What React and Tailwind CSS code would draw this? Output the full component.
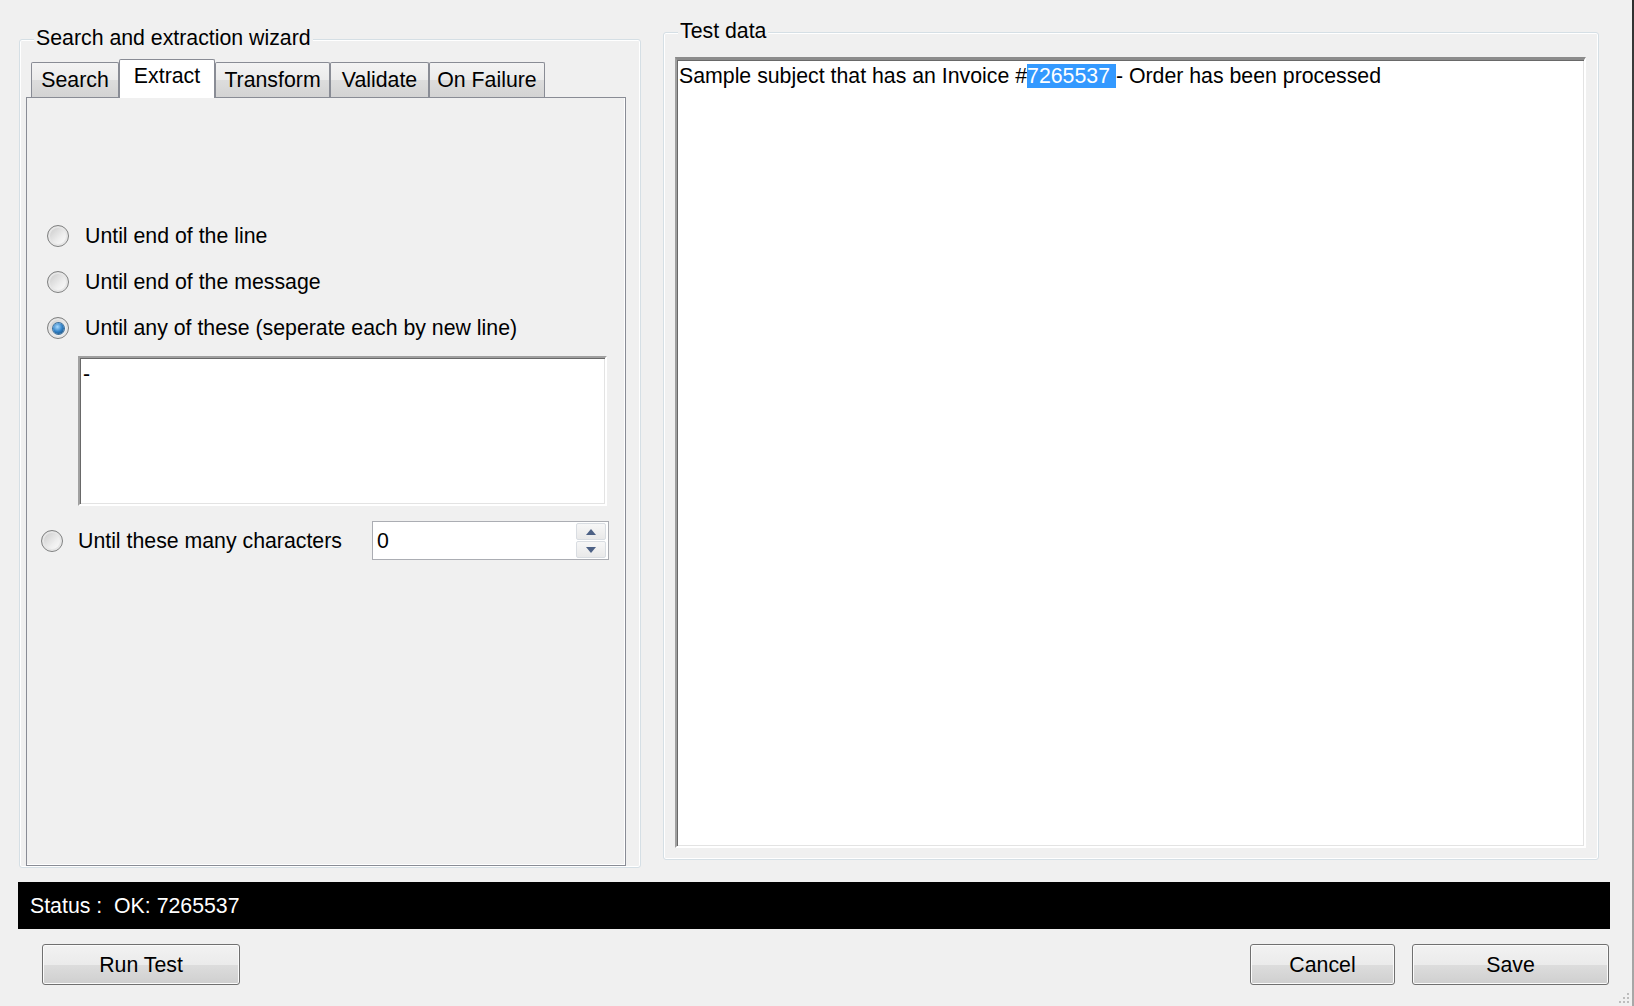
// App.jsx
function Radio({ checked }) {
  return (
    <span className="flex h-[22px] w-[22px] shrink-0 items-center justify-center rounded-full border border-[#7f8080] bg-[linear-gradient(135deg,#c6c6c6,#eeeeee_60%,#ffffff)] shadow-[inset_0_0_0_2px_#e6e6e6]">
      {checked && (
        <span className="h-[11px] w-[11px] rounded-full bg-[radial-gradient(circle_at_40%_35%,#a9dbff,#2f80c6_50%,#163f66)] shadow-[0_0_0_1px_#3a6f9c]" />
      )}
    </span>
  )
}

function Button({ children, className = '' }) {
  return (
    <button className={`flex h-[41px] items-center justify-center rounded-[3px] border border-[#707070] bg-[linear-gradient(#f2f2f2,#ebebeb_50%,#dddddd_50%,#cfcfcf)] shadow-[inset_0_0_0_1px_#fbfbfb] ${className}`}>
      {children}
    </button>
  )
}

function GroupBox({ title, className = '', children }) {
  return (
    <div className={`relative rounded-[3px] border border-[#d5dfe5] shadow-[inset_0_0_0_1px_#ffffff] ${className}`}>
      <span className="absolute left-[14px] top-[-14px] bg-[#f0f0f0] px-[2px]">{title}</span>
      {children}
    </div>
  )
}

function Tab({ label, selected, className = '' }) {
  if (selected) {
    return (
      <div className={`relative z-10 -mb-px flex h-[39px] items-start justify-center rounded-t-[2px] border border-b-0 border-[#898c95] bg-white pt-[4px] ${className}`}>
        {label}
      </div>
    )
  }
  return (
    <div className={`flex h-[35px] items-center justify-center rounded-t-[2px] border border-b-0 border-[#898c95] bg-[linear-gradient(#f3f3f3,#ebebeb_50%,#dddddd_50%,#d3d3d3)] ${className}`}>
      {label}
    </div>
  )
}

function Arrow({ up }) {
  return (
    <svg width="10" height="6" viewBox="0 0 10 6">
      {up ? <path d="M0 6 L5 0 L10 6 Z" fill="#4d6185" /> : <path d="M0 0 L5 6 L10 0 Z" fill="#4d6185" />}
    </svg>
  )
}

export default function App() {
  return (
    <div className="flex h-[1006px] w-[1634px] overflow-hidden bg-[#f0f0f0] font-['Liberation_Sans',Arial,sans-serif] text-[21.3px] leading-[24px] text-black">
      <div className="relative flex w-[1632px] flex-col">
        <div className="flex h-[868px] items-start pl-[19px]">
          {/* wizard */}
          <GroupBox title="Search and extraction wizard" className="mt-[39px] h-[829px] w-[622px]">
            <div className="ml-[6px] mt-[19px]">
              <div className="flex h-[38px] items-end pl-[5px]">
                <Tab label="Search" className="w-[88px]" />
                <Tab label="Extract" selected className="w-[96px]" />
                <Tab label="Transform" className="w-[115px]" />
                <Tab label="Validate" className="w-[99px]" />
                <Tab label="On Failure" className="w-[116px]" />
              </div>
              <div className="flex h-[769px] w-[600px] flex-col border border-[#898c95] pt-[115px] shadow-[inset_-1px_-1px_0_#ffffff]">
                <div className="flex h-[46px] items-center gap-[16px] pl-[20px]">
                  <Radio />
                  <span>Until end of the line</span>
                </div>
                <div className="flex h-[46px] items-center gap-[16px] pl-[20px]">
                  <Radio />
                  <span>Until end of the message</span>
                </div>
                <div className="flex h-[46px] items-center gap-[16px] pl-[20px]">
                  <Radio checked />
                  <span>Until any of these (seperate each by new line)</span>
                </div>
                <div className="ml-[51px] mt-[5px] h-[150px] w-[529px] border-2 border-b-white border-l-[#a0a0a0] border-r-white border-t-[#a0a0a0] bg-white pl-[3px] pt-[4px] shadow-[inset_1px_1px_0_#696969,inset_-1px_-1px_0_#e3e3e3]">
                  -
                </div>
                <div className="mt-[15px] flex h-[39px] items-center pl-[14px] pr-[16px]">
                  <Radio />
                  <span className="ml-[15px]">Until these many characters</span>
                  <div className="ml-auto flex h-[39px] w-[237px] items-center border border-[#abadb3] bg-white pl-[4px]">
                    <span className="flex-1">0</span>
                    <div className="mr-[2px] flex flex-col gap-[1px]">
                      <div className="flex h-[17px] w-[30px] items-center justify-center rounded-[2px] border border-[#d9dde2] bg-[linear-gradient(#f7f7f7,#e9e9e9)]">
                        <Arrow up />
                      </div>
                      <div className="flex h-[17px] w-[30px] items-center justify-center rounded-[2px] border border-[#d9dde2] bg-[linear-gradient(#f7f7f7,#e9e9e9)]">
                        <Arrow />
                      </div>
                    </div>
                  </div>
                </div>
              </div>
            </div>
          </GroupBox>

          {/* test data */}
          <GroupBox title="Test data" className="ml-[22px] mt-[32px] h-[828px] w-[936px]">
            <div className="ml-[11px] mt-[24px] h-[791px] w-[911px] border-2 border-t-[3px] border-b-white border-l-[#a0a0a0] border-r-white border-t-[#8c8c8c] bg-white pl-[2px] pt-[4px] shadow-[inset_1px_1px_0_#696969,inset_-1px_-1px_0_#e3e3e3]">
              <p className="whitespace-pre">
                Sample subject that has an Invoice #<span className="bg-[#3399ff] text-white">7265537 </span>- Order has been processed
              </p>
            </div>
          </GroupBox>
        </div>

        <div className="ml-[18px] mt-[14px] flex h-[47px] w-[1592px] items-center whitespace-pre bg-black pl-[12px] text-white">
          Status :  OK: 7265537
        </div>

        <div className="mt-[15px] flex h-[41px] pl-[42px] pr-[23px]">
          <Button className="w-[198px]">Run Test</Button>
          <div className="flex-1" />
          <Button className="w-[145px]">Cancel</Button>
          <Button className="ml-[17px] w-[197px]">Save</Button>
        </div>

        <svg className="absolute bottom-[2px] right-[2px]" width="12" height="12" viewBox="0 0 12 12">
          <rect x="9" y="1" width="2" height="2" fill="#bdbdbd" />
          <rect x="5" y="5" width="2" height="2" fill="#bdbdbd" />
          <rect x="9" y="5" width="2" height="2" fill="#bdbdbd" />
          <rect x="1" y="9" width="2" height="2" fill="#bdbdbd" />
          <rect x="5" y="9" width="2" height="2" fill="#bdbdbd" />
          <rect x="9" y="9" width="2" height="2" fill="#bdbdbd" />
        </svg>
      </div>
      <div className="w-[2px] bg-[linear-gradient(#2e2e2e,#7a7a7a_40%,#a8a8a8)]" />
    </div>
  )
}
